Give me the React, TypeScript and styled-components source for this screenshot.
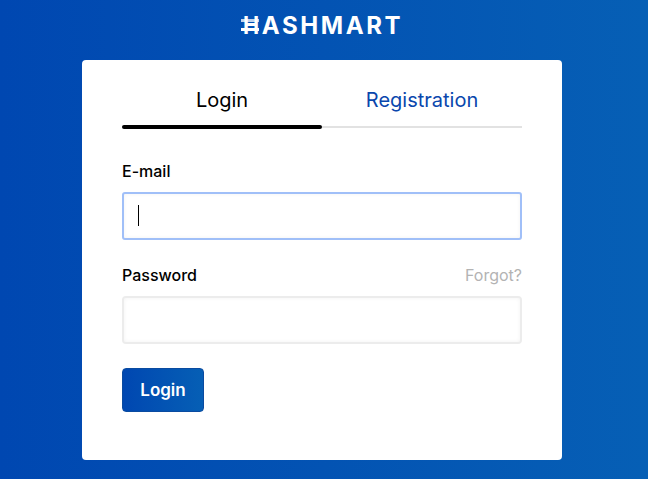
import { createGlobalStyle, styled } from "styled-components";

const GlobalStyle = createGlobalStyle`
  html, body {
    margin: 0;
    padding: 0;
    height: 100%;
  }
  body {
    font-family: "Inter", "Liberation Sans", sans-serif;
    overflow: hidden;
  }
`;

const Page = styled.div`
  box-sizing: border-box;
  width: 648px;
  height: 479px;
  padding-right: 4px;
  background: linear-gradient(90deg, #0047b1 0%, #065fb5 100%);
  display: flex;
  flex-direction: column;
  align-items: center;
`;

const Logo = styled.div`
  box-sizing: border-box;
  height: 60px;
  padding-bottom: 9px;
  display: flex;
  align-items: center;
  justify-content: center;
  color: #fff;
  font-size: 24px;
  font-weight: 700;
  letter-spacing: 2.6px;
`;

// the hash in the brand mark: hides the H crossbar, then draws two bars over it
const LogoH = styled.span`
  position: relative;
  display: inline-block;
  width: 21px;
  &::before {
    content: "";
    position: absolute;
    left: 7px;
    width: 7px;
    top: 12px;
    height: 5px;
    background: #0250b3;
  }
  &::after {
    content: "";
    position: absolute;
    left: 0;
    width: 18px;
    top: 8px;
    height: 3px;
    background: rgba(255, 255, 255, 0.75);
    box-shadow: 0 9px 0 #fff;
  }
`;

const LogoGlyph = styled.span`
  display: inline-block;
  margin-left: 2px;
  transform: scaleX(0.9);
  transform-origin: left center;
`;

const Card = styled.div`
  width: 400px;
  height: 400px;
  padding: 0 40px;
  background: #fff;
  border-radius: 4px;
`;

const Tabs = styled.div`
  display: flex;
  height: 66px;
  border-bottom: 2px solid #e2e2e2;
`;

const Tab = styled.div<{ $active?: boolean }>`
  position: relative;
  flex: 1;
  padding-top: 28px;
  text-align: center;
  font-size: 20px;
  line-height: 24px;
  color: ${(p) => (p.$active ? "#000" : "#0a47ad")};
  ${(p) =>
    p.$active &&
    `&::after {
      content: "";
      position: absolute;
      left: 0;
      right: 0;
      bottom: -3px;
      height: 4px;
      border-radius: 2px;
      background: #000;
    }`}
`;

const Form = styled.form`
  display: flex;
  flex-direction: column;
  align-items: flex-start;
  padding-top: 31px;
`;

const Field = styled.div`
  width: 100%;
  margin-bottom: 23px;
`;

const LabelRow = styled.div`
  display: flex;
  justify-content: space-between;
  align-items: center;
  height: 24px;
  margin-bottom: 9px;
`;

const Label = styled.label`
  font-size: 16px;
  font-weight: 500;
  color: #000;
`;

const Forgot = styled.a`
  font-size: 16px;
  color: #b3b3b3;
`;

const Input = styled.div<{ $focused?: boolean }>`
  box-sizing: border-box;
  height: 48px;
  padding: 11px 14px;
  background: #fff;
  border: 2px solid ${(p) => (p.$focused ? "#a0bff8" : "#ececec")};
  border-radius: ${(p) => (p.$focused ? "3px" : "4px")};
  box-shadow: inset 0 0 4px rgba(0, 0, 0, 0.05);
`;

const Caret = styled.div`
  width: 1px;
  height: 21px;
  background: #000;
`;

const Button = styled.button`
  width: 82px;
  height: 44px;
  margin-top: 1px;
  padding: 0;
  border: 1px solid #0a4ba0;
  border-radius: 4px;
  background: linear-gradient(90deg, #0047b1 0%, #065fb5 100%);
  color: #fff;
  font-family: inherit;
  font-size: 17px;
  font-weight: 600;
`;

export default function App() {
  return (
    <>
      <GlobalStyle />
      <Page>
        <Logo>
          <LogoH>
            <LogoGlyph>H</LogoGlyph>
          </LogoH>
          ASHMART
        </Logo>
        <Card>
          <Tabs>
            <Tab $active>Login</Tab>
            <Tab>Registration</Tab>
          </Tabs>
          <Form>
            <Field>
              <LabelRow>
                <Label>E-mail</Label>
              </LabelRow>
              <Input $focused>
                <Caret />
              </Input>
            </Field>
            <Field>
              <LabelRow>
                <Label>Password</Label>
                <Forgot>Forgot?</Forgot>
              </LabelRow>
              <Input />
            </Field>
            <Button type="button">Login</Button>
          </Form>
        </Card>
      </Page>
    </>
  );
}
